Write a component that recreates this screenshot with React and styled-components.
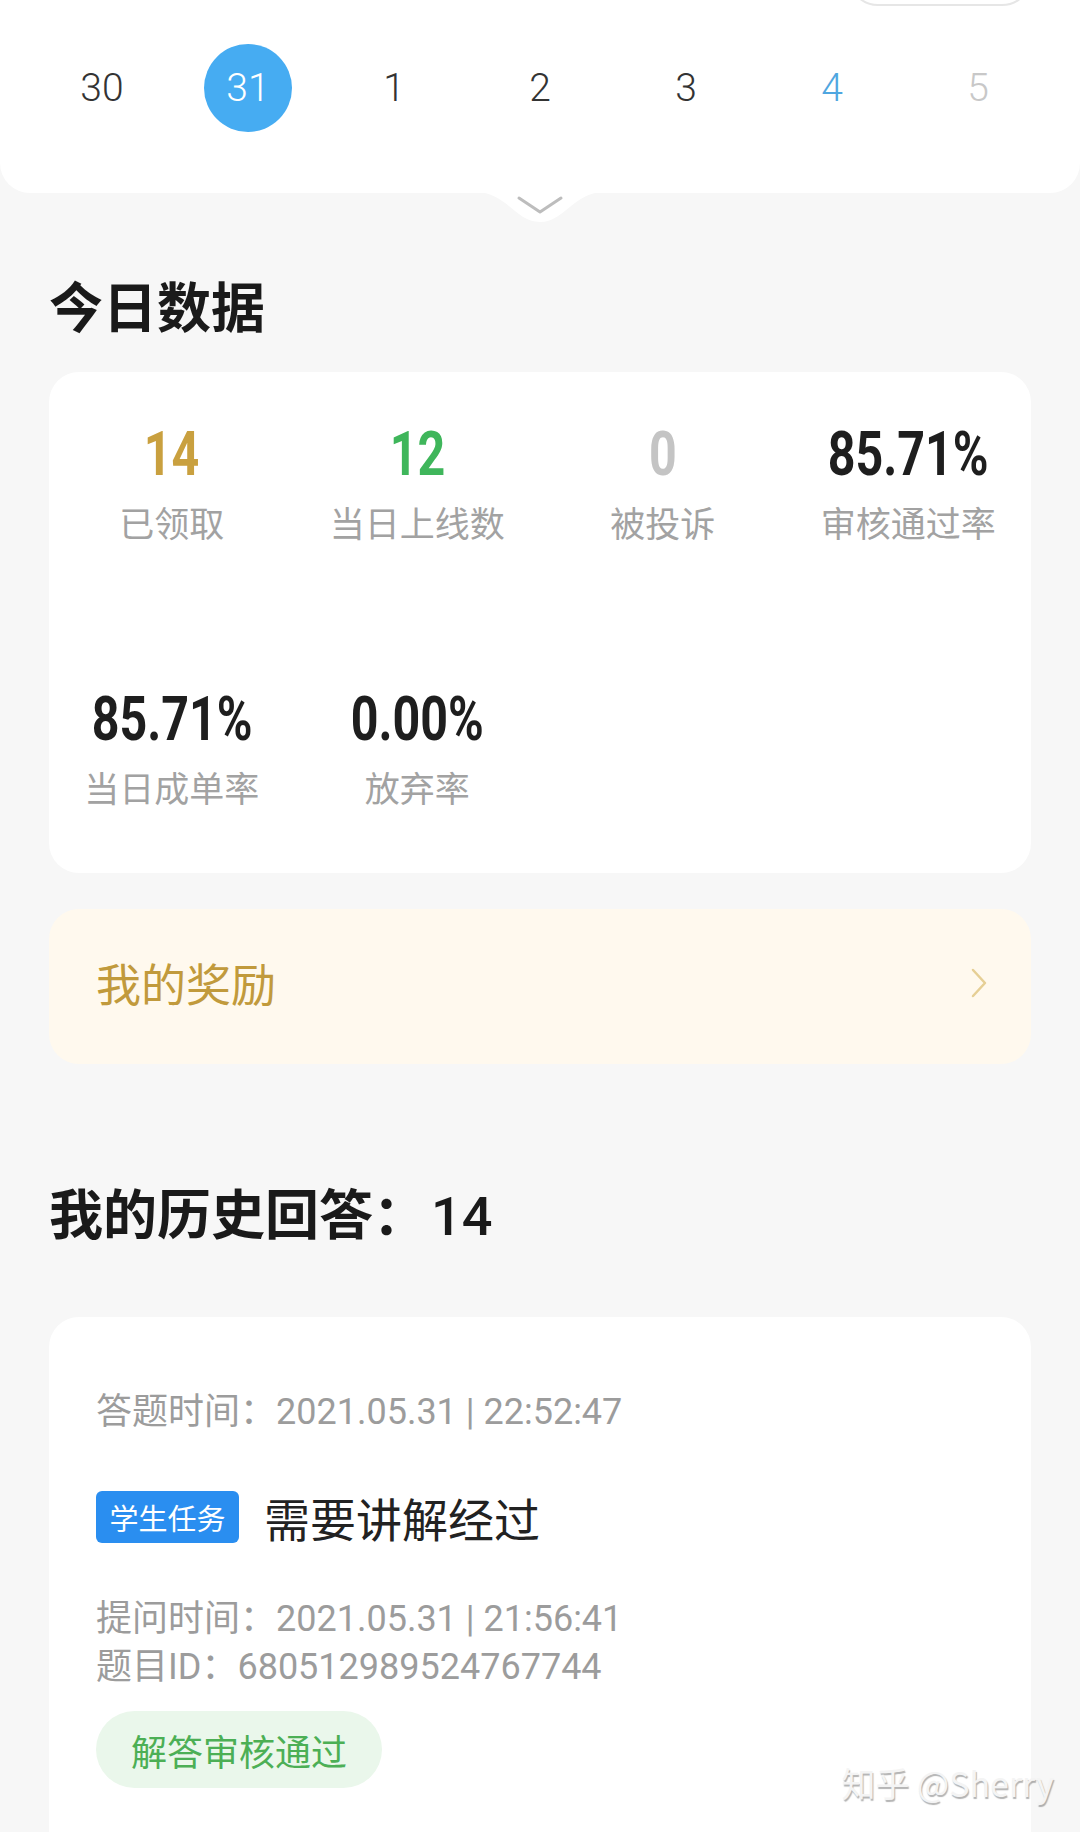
import React from 'react'
import styled, { createGlobalStyle } from 'styled-components'

const GlobalStyle = createGlobalStyle`
  html, body {
    margin: 0;
    padding: 0;
    background: #f7f7f7;
  }
  * { box-sizing: border-box; }
`

const Page = styled.div`
  position: relative;
  width: 1080px;
  min-height: 1832px;
  height: 1832px;
  overflow: hidden;
  background: #f7f7f7;
  font-family: Roboto, "Noto Sans CJK SC", sans-serif;
`

const DateCard = styled.div`
  background: #fff;
  border-radius: 0 0 30px 30px;
  height: 193px;
  padding: 0 29px;
`

const TopBar = styled.div`
  height: 6px;
  overflow: hidden;
  display: flex;
  justify-content: flex-end;
  align-items: flex-end;
  padding-right: 19px;
`

const TodayPill = styled.div`
  flex-shrink: 0;
  width: 184px;
  height: 60px;
  border: 2px solid #e6e6e6;
  border-radius: 30px;
`

const DateRow = styled.div`
  display: grid;
  grid-template-columns: repeat(7, 1fr);
  margin-top: 38px;
  height: 88px;
`

const DateCell = styled.div`
  display: flex;
  align-items: center;
  justify-content: center;
`

const DateNum = styled.div`
  width: 88px;
  height: 88px;
  border-radius: 50%;
  display: flex;
  align-items: center;
  justify-content: center;
  font-family: Roboto, sans-serif;
  font-weight: 300;
  font-size: 39px;
  color: ${p => p.$color};
  background: ${p => (p.$active ? '#46acf2' : 'transparent')};
`

const Bump = styled.div`
  display: flex;
  justify-content: center;
  height: 30px;
  margin-top: -1px;
`

const SectionTitle = styled.h2`
  margin: ${p => p.$mt}px 0 0;
  padding-left: 49px;
  font-family: "Noto Sans CJK SC", sans-serif;
  font-weight: 700;
  font-size: 54px;
  line-height: 76px;
  color: #1a1a1a;
  letter-spacing: 0;
`

const CountNum = styled.span`
  font-family: Roboto, sans-serif;
  font-weight: 500;
  margin-left: 4px;
`

const Card = styled.div`
  margin: ${p => p.$mt}px 49px 0;
  background: ${p => p.$bg || '#fff'};
  border-radius: 30px;
`

const StatsGrid = styled.div`
  display: grid;
  grid-template-columns: repeat(4, 1fr);
  row-gap: 142px;
  padding: 47px 0 66px;
`

const Stat = styled.div`
  display: flex;
  flex-direction: column;
  align-items: center;
`

const StatValue = styled.div`
  font-family: Roboto, sans-serif;
  font-weight: 700;
  font-size: 62px;
  line-height: 70px;
  color: ${p => p.$color};
  transform: scaleX(0.78);
  white-space: nowrap;
`

const StatLabel = styled.div`
  margin-top: 13px;
  font-family: "Noto Sans CJK SC", sans-serif;
  font-size: 35px;
  line-height: 40px;
  color: #a2a2a2;
`

const RewardRow = styled.div`
  height: 155px;
  display: flex;
  align-items: center;
  justify-content: space-between;
  padding: 0 43px 8px 47px;
  font-family: "Noto Sans CJK SC", sans-serif;
  font-size: 45px;
  color: #c19a3c;
`

const HistoryBody = styled.div`
  padding: 70px 47px 120px;
`

const MetaLine = styled.div`
  font-size: 36px;
  line-height: ${p => p.$lh || 48}px;
  color: #9c9c9c;
  white-space: nowrap;
`

const TaskRow = styled.div`
  display: flex;
  align-items: center;
  margin: 52px 0 50px;
`

const TaskTag = styled.span`
  display: inline-flex;
  align-items: center;
  justify-content: center;
  width: 143px;
  height: 52px;
  border-radius: 6px;
  background: #2a8ef0;
  color: #fff;
  font-family: "Noto Sans CJK SC", sans-serif;
  font-size: 29px;
`

const TaskTitle = styled.span`
  margin-left: 25px;
  font-family: "Noto Sans CJK SC", sans-serif;
  font-size: 46px;
  line-height: 56px;
  color: #222;
`

const StatusBadge = styled.div`
  display: inline-flex;
  align-items: center;
  justify-content: center;
  margin-top: 20px;
  width: 286px;
  height: 77px;
  border-radius: 39px;
  background: #eaf7eb;
  color: #4caf55;
  font-family: "Noto Sans CJK SC", sans-serif;
  font-size: 36px;
`

const Watermark = styled.div`
  position: absolute;
  right: 26px;
  top: 1758px;
  font-family: "Noto Sans CJK SC", sans-serif;
  font-size: 34px;
  color: #f4f4f4;
  text-shadow: 1px 2px 1px rgba(0, 0, 0, 0.3);
`

const dates = [
  { n: '30', c: '#333' },
  { n: '31', c: '#fff', active: true },
  { n: '1', c: '#333' },
  { n: '2', c: '#333' },
  { n: '3', c: '#333' },
  { n: '4', c: '#4fa6e0' },
  { n: '5', c: '#c8c8c8' },
]

const stats = [
  { v: '14', l: '已领取', c: '#c9a03f' },
  { v: '12', l: '当日上线数', c: '#3fb65b' },
  { v: '0', l: '被投诉', c: '#c4c4c4' },
  { v: '85.71%', l: '审核通过率', c: '#1e1e1e' },
  { v: '85.71%', l: '当日成单率', c: '#1e1e1e' },
  { v: '0.00%', l: '放弃率', c: '#1e1e1e' },
]

const App = () => {
  return (
    <Page>
      <GlobalStyle />
      <DateCard>
        <TopBar>
          <TodayPill />
        </TopBar>
        <DateRow>
          {dates.map(d => (
            <DateCell key={d.n}>
              <DateNum $color={d.c} $active={d.active}>{d.n}</DateNum>
            </DateCell>
          ))}
        </DateRow>
      </DateCard>
      <Bump>
        <svg width="130" height="31" viewBox="0 0 130 31">
          <path d="M0 0 C32 0 40 30 65 30 C90 30 98 0 130 0 Z" fill="#fff" />
          <polyline points="44,6 65,20 86,6" fill="none" stroke="#bdbdbd" strokeWidth="3" strokeLinecap="round" strokeLinejoin="round" />
        </svg>
      </Bump>

      <SectionTitle $mt={45}>今日数据</SectionTitle>
      <Card $mt={29}>
        <StatsGrid>
          {stats.map((s, i) => (
            <Stat key={i}>
              <StatValue $color={s.c}>{s.v}</StatValue>
              <StatLabel>{s.l}</StatLabel>
            </Stat>
          ))}
        </StatsGrid>
      </Card>

      <Card $mt={36} $bg="#fff9ee">
        <RewardRow>
          <span>我的奖励</span>
          <svg width="18" height="30" viewBox="0 0 18 30">
            <polyline points="3,2 15,15 3,28" fill="none" stroke="#e6cf95" strokeWidth="2.5" strokeLinecap="round" strokeLinejoin="round" />
          </svg>
        </RewardRow>
      </Card>

      <SectionTitle $mt={110}>我的历史回答：<CountNum>14</CountNum></SectionTitle>
      <Card $mt={62}>
        <HistoryBody>
          <MetaLine $lh={50}>答题时间：2021.05.31 | 22:52:47</MetaLine>
          <TaskRow>
            <TaskTag>学生任务</TaskTag>
            <TaskTitle>需要讲解经过</TaskTitle>
          </TaskRow>
          <MetaLine>提问时间：2021.05.31 | 21:56:41</MetaLine>
          <MetaLine>题目ID：680512989524767744</MetaLine>
          <StatusBadge>解答审核通过</StatusBadge>
        </HistoryBody>
      </Card>

      <Watermark>知乎 @Sherry</Watermark>
    </Page>
  )
}

export default App
